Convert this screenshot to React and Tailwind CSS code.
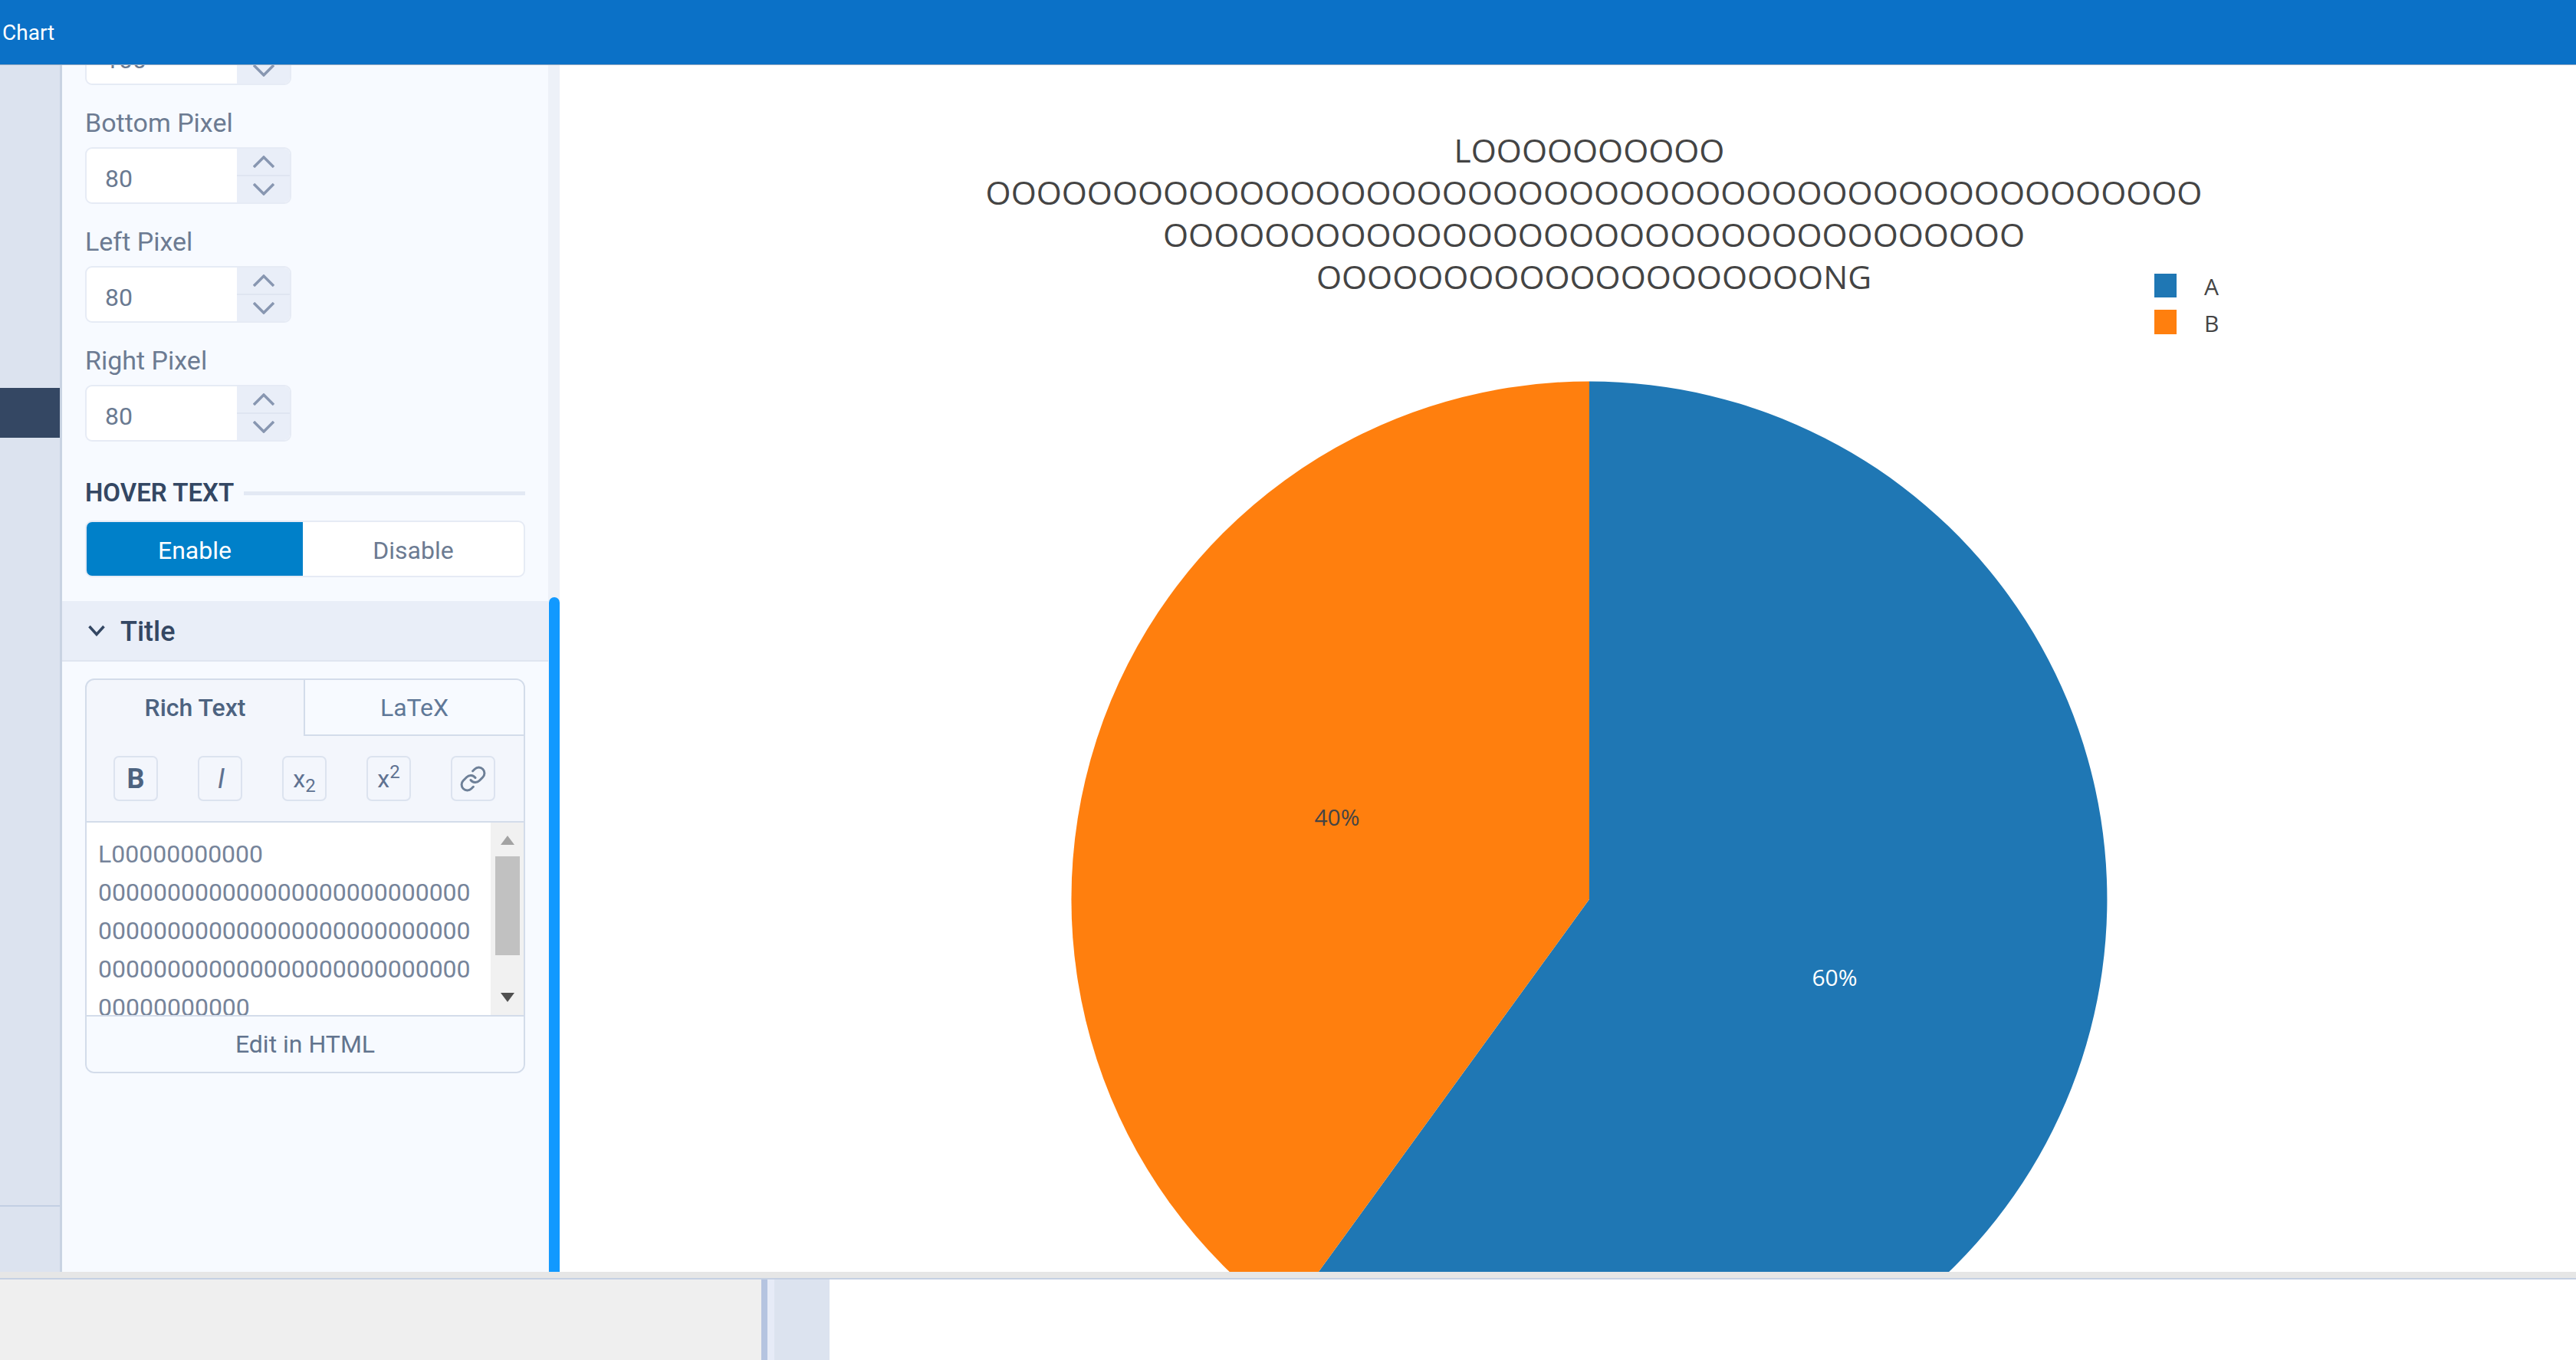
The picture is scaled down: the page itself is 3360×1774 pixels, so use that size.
import React from "react";
import { Link } from "lucide-react";

const pixelFields = [
  { label: "Bottom Pixel", value: "80" },
  { label: "Left Pixel", value: "80" },
  { label: "Right Pixel", value: "80" },
];

const titleLines = [
  { text: "L" + "O".repeat(10), x: 1343, y: 128 },
  { text: "O".repeat(48), x: 1349, y: 183 },
  { text: "O".repeat(34), x: 1349, y: 238 },
  { text: "O".repeat(20) + "NG", x: 1349, y: 293 },
];

const editorLines = [
  "L" + "0".repeat(11),
  "0".repeat(27),
  "0".repeat(27),
  "0".repeat(27),
  "0".repeat(11),
];

const Chevron = ({ up }) => (
  <svg width="28" height="16" viewBox="0 0 28 16" fill="none" stroke="#8897b1" strokeWidth="3.5">
    <polyline points={up ? "1,15 14,2 27,15" : "1,1 14,14 27,1"} />
  </svg>
);

const NumberInput = ({ value }) => (
  <div className="flex h-[74px] w-[269px] overflow-hidden rounded-[9px] border-2 border-[#e6ebf5] bg-white">
    <div className="flex flex-1 items-center pt-[7px] pl-[24px] text-[32px] text-[#6a7a91]">{value}</div>
    <div className="flex w-[69px] flex-col bg-[#e9eef8]">
      <div className="flex flex-1 items-center justify-center border-b-2 border-[#dfe5f1]">
        <Chevron up />
      </div>
      <div className="flex flex-1 items-center justify-center">
        <Chevron />
      </div>
    </div>
  </div>
);

const ToolButton = ({ children }) => (
  <div className="flex h-[59px] w-[58px] items-center justify-center rounded-[7px] border-2 border-[#dce3ef] text-[#5f7291]">
    {children}
  </div>
);

const PieChart = () => (
  <svg width="2630" height="1574" viewBox="0 1 2630 1574" className="block">
    {titleLines.map((line) => (
      <text
        key={line.y}
        x={line.x}
        y={line.y}
        textAnchor="middle"
        className="fill-[#444444] font-['Open_Sans'] text-[42.5px]"
      >
        {line.text}
      </text>
    ))}
    <rect x="2080" y="273" width="29" height="31" fill="#1f77b4" />
    <rect x="2080" y="320" width="29" height="32" fill="#ff7f0e" />
    <text x="2145" y="301" className="fill-[#444444] font-['Open_Sans'] text-[30px]">A</text>
    <text x="2145" y="349" className="fill-[#444444] font-['Open_Sans'] text-[30px]">B</text>
    <path d="M1343 1089 L1343 413.5 A675.5 675.5 0 1 1 945.9 1635.5 Z" fill="#1f77b4" />
    <path d="M1343 1089 L945.9 1635.5 A675.5 675.5 0 0 1 1343 413.5 Z" fill="#ff7f0e" />
    <text x="1014" y="993" textAnchor="middle" className="fill-[#444444] font-['Open_Sans'] text-[30px]">40%</text>
    <text x="1663" y="1202" textAnchor="middle" className="fill-white font-['Open_Sans'] text-[30px] font-medium">60%</text>
  </svg>
);

const Sidebar = () => (
  <div className="w-[634px] overflow-hidden bg-[#f7faff]">
    <div className="mt-[-48px] ml-[30px]">
      <NumberInput value="100" />
    </div>
    {pixelFields.map((field) => (
      <div key={field.label} className="mt-[27px] ml-[30px]">
        <div className="mb-[10px] h-[44px] text-[34px] leading-[44px] text-[#6c7b92]">{field.label}</div>
        <NumberInput value={field.value} />
      </div>
    ))}

    <div className="mt-[45px] ml-[30px] flex h-[44px] w-[574px] items-center">
      <span className="text-[33px] font-semibold text-[#344763]">HOVER TEXT</span>
      <div className="ml-[13px] h-[5px] flex-1 bg-[#e3e9f4]" />
    </div>
    <div className="mt-[14px] ml-[30px] flex h-[74px] w-[574px] overflow-hidden rounded-[9px] border-2 border-[#e6ebf5] bg-white text-[32px]">
      <div className="flex w-[282px] items-center justify-center bg-[#0080c9] pt-[3px] text-white">Enable</div>
      <div className="flex flex-1 items-center justify-center pt-[3px] text-[#6c7b92]">Disable</div>
    </div>

    <div className="mt-[31px] flex h-[79px] items-center border-b-2 border-[#dfe5f0] bg-[#e9eef8] pl-[34px]">
      <svg width="22" height="15" viewBox="0 0 22 15" fill="none" stroke="#344763" strokeWidth="3.5">
        <polyline points="1.5,2 11,12.5 20.5,2" />
      </svg>
      <span className="ml-[20px] pt-[2px] text-[36px] font-medium text-[#344763]">Title</span>
    </div>

    <div className="mt-[22px] ml-[30px] flex h-[515px] w-[574px] flex-col overflow-hidden rounded-[12px] border-2 border-[#d3dcea] bg-[#f3f6fc]">
      <div className="flex h-[73px] text-[32px]">
        <div className="flex w-[283px] items-center justify-center pb-[2px] font-medium text-[#4d6380]">Rich Text</div>
        <div className="flex flex-1 items-center justify-center border-b-2 border-l-2 border-[#d3dcea] bg-[#f7faff] text-[#5f7898]">
          LaTeX
        </div>
      </div>
      <div className="flex h-[113px] items-center gap-[52px] border-b-2 border-[#d3dcea] pl-[35px]">
        <ToolButton>
          <span className="text-[36px] font-bold text-[#4d6380]">B</span>
        </ToolButton>
        <ToolButton>
          <span className="ml-[3px] text-[36px] italic">I</span>
        </ToolButton>
        <ToolButton>
          <span className="text-[32px]">
            x<sub>2</sub>
          </span>
        </ToolButton>
        <ToolButton>
          <span className="text-[32px]">
            x<sup>2</sup>
          </span>
        </ToolButton>
        <ToolButton>
          <Link size={36} strokeWidth={2} color="#6e8098" />
        </ToolButton>
      </div>
      <div className="flex h-[251px] bg-white">
        <div className="flex-1 overflow-hidden pt-[16px] pl-[15px] text-[32px] leading-[50px] text-[#76849a]">
          {editorLines.map((line, index) => (
            <div key={index}>{line}</div>
          ))}
        </div>
        <div className="flex w-[43px] flex-col items-center bg-[#f1f1f1]">
          <svg className="mt-[17px]" width="18" height="12" viewBox="0 0 18 12">
            <polygon points="9,0 18,12 0,12" fill="#a3a3a3" />
          </svg>
          <div className="mt-[15px] h-[129px] w-[32px] bg-[#c1c1c1]" />
          <svg className="mt-[49px]" width="18" height="12" viewBox="0 0 18 12">
            <polygon points="0,0 18,0 9,12" fill="#505050" />
          </svg>
        </div>
      </div>
      <div className="flex flex-1 items-center justify-center border-t-2 border-[#d3dcea] bg-[#f7faff] text-[32px] text-[#62748e]">
        Edit in HTML
      </div>
    </div>
  </div>
);

const App = () => {
  return (
    <div className="flex h-[1774px] w-[3360px] flex-col overflow-hidden bg-white font-['Roboto',sans-serif]">
      <header className="flex h-[85px] shrink-0 items-center border-b border-[#9fb0c4] bg-[#0b71c7] pt-[2px] pl-[3px] text-[28px] text-white">
        Chart
      </header>

      <main className="flex h-[1574px] shrink-0">
        <div className="flex w-[81px] flex-col border-r-[3px] border-[#c9d3e2] bg-[#dce3ef]">
          <div className="mt-[421px] h-[65px] bg-[#344763]" />
          <div className="mt-[1001px] h-[2px] bg-[#c3cfe3]" />
        </div>
        <Sidebar />
        <div className="w-[15px] bg-[#edf1f8] pl-px">
          <div className="mt-[694px] h-[880px] rounded-t-full rounded-b-md bg-[#1199ff]" />
        </div>
        <div className="flex-1 overflow-hidden">
          <PieChart />
        </div>
      </main>

      <div className="h-[10px] shrink-0 border-b-2 border-[#c5d0e3] bg-[#e6e6e6]" />
      <div className="flex flex-1">
        <div className="w-[993px] bg-[#efefef]" />
        <div className="w-[8px] bg-[#b5c4e0]" />
        <div className="w-[9px] bg-[#e6ebf7]" />
        <div className="w-[72px] bg-[#dce3ef]" />
      </div>
    </div>
  );
};

export default App;
